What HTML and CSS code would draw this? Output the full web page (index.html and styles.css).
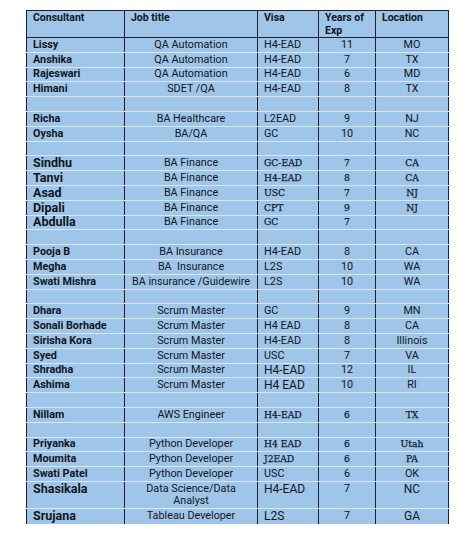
FILE: index.html
```html
<!DOCTYPE html>
<html>
<head>
<meta charset="utf-8">
<link rel="stylesheet" href="styles.css">
</head>
<body>
<table class="grid">
  <colgroup>
    <col class="c1"><col class="c2"><col class="c3"><col class="c4"><col class="c5">
  </colgroup>
  <thead>
    <tr class="head">
      <th>Consultant</th><th>Job title</th><th>Visa</th><th>Years of<br>Exp</th><th>Location</th>
    </tr>
  </thead>
  <tbody>
    <tr><td class="n">Lissy</td><td class="j">QA Automation</td><td class="v">H4-EAD</td><td class="y">11</td><td class="l">MO</td></tr>
    <tr><td class="n">Anshika</td><td class="j">QA Automation</td><td class="v">H4-EAD</td><td class="y">7</td><td class="l">TX</td></tr>
    <tr><td class="n">Rajeswari</td><td class="j">QA Automation</td><td class="v">H4-EAD</td><td class="y">6</td><td class="l">MD</td></tr>
    <tr><td class="n">Himani</td><td class="j">SDET /QA</td><td class="v">H4-EAD</td><td class="y">8</td><td class="l">TX</td></tr>
    <tr class="blank"><td></td><td></td><td></td><td></td><td></td></tr>
    <tr><td class="n">Richa</td><td class="j">BA Healthcare</td><td class="v">L2EAD</td><td class="y">9</td><td class="l">NJ</td></tr>
    <tr><td class="n">Oysha</td><td class="j">BA/QA</td><td class="v">GC</td><td class="y">10</td><td class="l">NC</td></tr>
    <tr class="blank"><td></td><td></td><td></td><td></td><td></td></tr>
    <tr><td class="n big">Sindhu</td><td class="j">BA Finance</td><td class="v serif">GC-EAD</td><td class="y serif">7</td><td class="l serif">CA</td></tr>
    <tr><td class="n big">Tanvi</td><td class="j">BA Finance</td><td class="v serif">H4-EAD</td><td class="y serif">8</td><td class="l serif">CA</td></tr>
    <tr><td class="n big">Asad</td><td class="j">BA Finance</td><td class="v serif">USC</td><td class="y serif">7</td><td class="l serif">NJ</td></tr>
    <tr><td class="n big">Dipali</td><td class="j">BA Finance</td><td class="v serif">CPT</td><td class="y serif">9</td><td class="l serif">NJ</td></tr>
    <tr><td class="n big">Abdulla</td><td class="j">BA Finance</td><td class="v serif">GC</td><td class="y serif">7</td><td class="l"></td></tr>
    <tr class="blank"><td></td><td></td><td></td><td></td><td></td></tr>
    <tr><td class="n">Pooja B</td><td class="j">BA Insurance</td><td class="v">H4-EAD</td><td class="y">8</td><td class="l">CA</td></tr>
    <tr><td class="n">Megha</td><td class="j">BA&nbsp; Insurance</td><td class="v">L2S</td><td class="y">10</td><td class="l">WA</td></tr>
    <tr><td class="n">Swati Mishra</td><td class="j">BA insurance /Guidewire</td><td class="v">L2S</td><td class="y">10</td><td class="l">WA</td></tr>
    <tr class="blank"><td></td><td></td><td></td><td></td><td></td></tr>
    <tr><td class="n">Dhara</td><td class="j">Scrum Master</td><td class="v">GC</td><td class="y">9</td><td class="l">MN</td></tr>
    <tr><td class="n">Sonali Borhade</td><td class="j">Scrum Master</td><td class="v">H4 EAD</td><td class="y">8</td><td class="l">CA</td></tr>
    <tr><td class="n">Sirisha Kora</td><td class="j">Scrum Master</td><td class="v">H4-EAD</td><td class="y">8</td><td class="l">Illinois</td></tr>
    <tr><td class="n">Syed</td><td class="j">Scrum Master</td><td class="v">USC</td><td class="y">7</td><td class="l">VA</td></tr>
    <tr><td class="n">Shradha</td><td class="j">Scrum Master</td><td class="v bigv">H4-EAD</td><td class="y">12</td><td class="l">IL</td></tr>
    <tr><td class="n">Ashima</td><td class="j">Scrum Master</td><td class="v bigv">H4 EAD</td><td class="y">10</td><td class="l">RI</td></tr>
    <tr class="blank"><td></td><td></td><td></td><td></td><td></td></tr>
    <tr><td class="n">Nillam</td><td class="j">AWS Engineer</td><td class="v serif">H4-EAD</td><td class="y serif">6</td><td class="l serif">TX</td></tr>
    <tr class="blank"><td></td><td></td><td></td><td></td><td></td></tr>
    <tr><td class="n">Priyanka</td><td class="j">Python Developer</td><td class="v serif">H4 EAD</td><td class="y serif">6</td><td class="l serif">Utah</td></tr>
    <tr><td class="n">Moumita</td><td class="j">Python Developer</td><td class="v serif">J2EAD</td><td class="y serif">6</td><td class="l serif">PA</td></tr>
    <tr><td class="n">Swati Patel</td><td class="j">Python Developer</td><td class="v">USC</td><td class="y">6</td><td class="l">OK</td></tr>
    <tr class="tall"><td class="n big">Shasikala</td><td class="j">Data Science/Data<br>Analyst</td><td class="v bigv">H4-EAD</td><td class="y">7</td><td class="l bigv">NC</td></tr>
    <tr class="last"><td class="n big">Srujana</td><td class="j">Tableau Developer</td><td class="v bigv">L2S</td><td class="y">7</td><td class="l bigv">GA</td></tr>
  </tbody>
</table>
</body>
</html>
```

FILE: styles.css
```css
html, body {
  margin: 0;
  padding: 0;
  background: #ffffff;
}

body {
  padding: 10px 0 0 26px;
  font-family: Roboto, "Liberation Sans", Arial, sans-serif;
  color: #12161f;
}

.grid {
  border-collapse: collapse;
  table-layout: fixed;
  width: 423px;
  background: #9fc5e8;
  border-top: 1.5px solid #1c2030;
  border-left: 1.5px solid #1c2030;
  border-right: 1.5px solid #1c2030;
}

.c1 { width: 98px; }
.c2 { width: 133px; }
.c3 { width: 61px; }
.c4 { width: 57px; }
.c5 { width: 73px; }

th, td {
  padding: 0;
  border-left: 1.5px solid #1c2030;
  border-right: 1.5px solid #1c2030;
  overflow: visible;
  white-space: nowrap;
}

.head th {
  height: 25px;
  vertical-align: top;
  text-align: left;
  font-weight: 700;
  font-size: 10.5px;
  line-height: 12.5px;
  padding: 1px 0 0 6px;
  border-bottom: 1.5px solid #1c2030;
}

tbody td {
  height: 13.8px;
  border-bottom: 1px solid #d6e6f5;
  font-size: 10.8px;
  line-height: 12px;
  vertical-align: middle;
}

.n {
  font-weight: 700;
  padding-left: 6px;
}

.big {
  font-size: 12.5px;
}

.j {
  text-align: center;
  white-space: nowrap;
}

.v {
  padding-left: 6px;
}

.y, .l {
  text-align: center;
}

.serif {
  font-family: "DejaVu Serif", "Liberation Serif", serif;
  font-size: 9.2px;
  color: #101a33;
  -webkit-text-stroke: 0.25px #101a33;
}

.bigv {
  font-size: 12px;
}

.tall td {
  height: 24px;
  vertical-align: top;
  padding-top: 1px;
}

.tall .j {
  line-height: 12.5px;
}

.last td {
  height: 15px;
  border-bottom: none;
}
```
